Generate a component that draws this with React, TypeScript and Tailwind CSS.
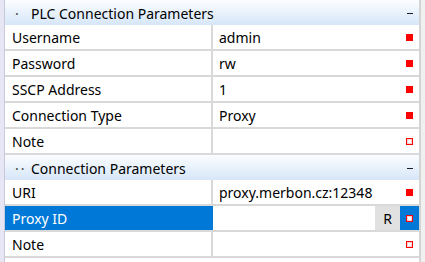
import React from "react";

type Row = { label: string; value: string; filled: boolean; selected?: boolean };

const group1: Row[] = [
  { label: "Username", value: "admin", filled: true },
  { label: "Password", value: "rw", filled: true },
  { label: "SSCP Address", value: "1", filled: true },
  { label: "Connection Type", value: "Proxy", filled: true },
  { label: "Note", value: "", filled: false },
];
const group2: Row[] = [
  { label: "URI", value: "proxy.merbon.cz:12348", filled: true },
  { label: "Proxy ID", value: "", filled: false, selected: true },
  { label: "Note", value: "", filled: false },
];

function Marker({ filled }: { filled: boolean }) {
  return filled ? (
    <div className="w-[7px] h-[7px] bg-[#ff0000]" />
  ) : (
    <div className="w-[7px] h-[7px] border border-[#ff0000] bg-white shadow-[inset_0_0_0_1px_#f6d0d0]" />
  );
}

function Header({ dots, title }: { dots: string; title: string }) {
  return (
    <div className="h-[25px] flex items-center bg-gradient-to-b from-[#fbfdff] to-[#d6e6f8] text-[14px] text-black">
      <span className="w-[26px] pl-[10px] text-[#444] tracking-[2px] pt-[1px]">{dots}</span>
      <span className="flex-1 pt-[1px]">{title}</span>
      <div className="w-[19px] flex justify-center">
        <div className="w-[6px] h-[1.5px] bg-[#1a1a2a] mt-[2px]" />
      </div>
    </div>
  );
}

function PropRow({ row }: { row: Row }) {
  return (
    <div className="h-[26px] flex border-b-2 border-[#d9d9d9] text-[14px]">
      <div
        className={
          row.selected
            ? "w-[206px] bg-[#0078d7] text-white pl-[7px] pt-[1px] flex items-center"
            : "w-[206px] text-black pl-[7px] pt-[1px] flex items-center"
        }
      >
        {row.label}
      </div>
      <div className={row.selected ? "w-[2px] bg-[#0078d7]" : "w-[2px] bg-[#d9d9d9]"} />
      <div className="flex-1 flex items-center pl-[6px] pt-[1px] text-black">{row.value}</div>
      {row.selected ? (
        <div className="w-[25px] bg-[#e1e1e1] flex items-center justify-center pt-[1px] text-[14px] text-black">R</div>
      ) : null}
      <div className={row.selected ? "w-[19px] bg-[#0078d7] flex items-center justify-center" : "w-[19px] flex items-center justify-center"}>
        <Marker filled={row.filled} />
      </div>
    </div>
  );
}

export default function App() {
  return (
    <div
      className="w-[425px] h-[262px] flex bg-white overflow-hidden"
      style={{ fontFamily: '"Noto Sans", "Open Sans", sans-serif' }}
    >
      <div className="w-[5px] bg-[#e6e6f4] border-r border-[#c9c9dc]" />
      <div className="w-[414px] flex flex-col">
        <Header dots="·" title="PLC Connection Parameters" />
        {group1.map((r, i) => (
          <PropRow key={"a" + i} row={r} />
        ))}
        <Header dots="··" title="Connection Parameters" />
        {group2.map((r, i) => (
          <PropRow key={"b" + i} row={r} />
        ))}
      </div>
      <div className="w-[2px] bg-[#d4d4d4]" />
      <div className="flex-1 bg-[#f0f0f0]" />
    </div>
  );
}
